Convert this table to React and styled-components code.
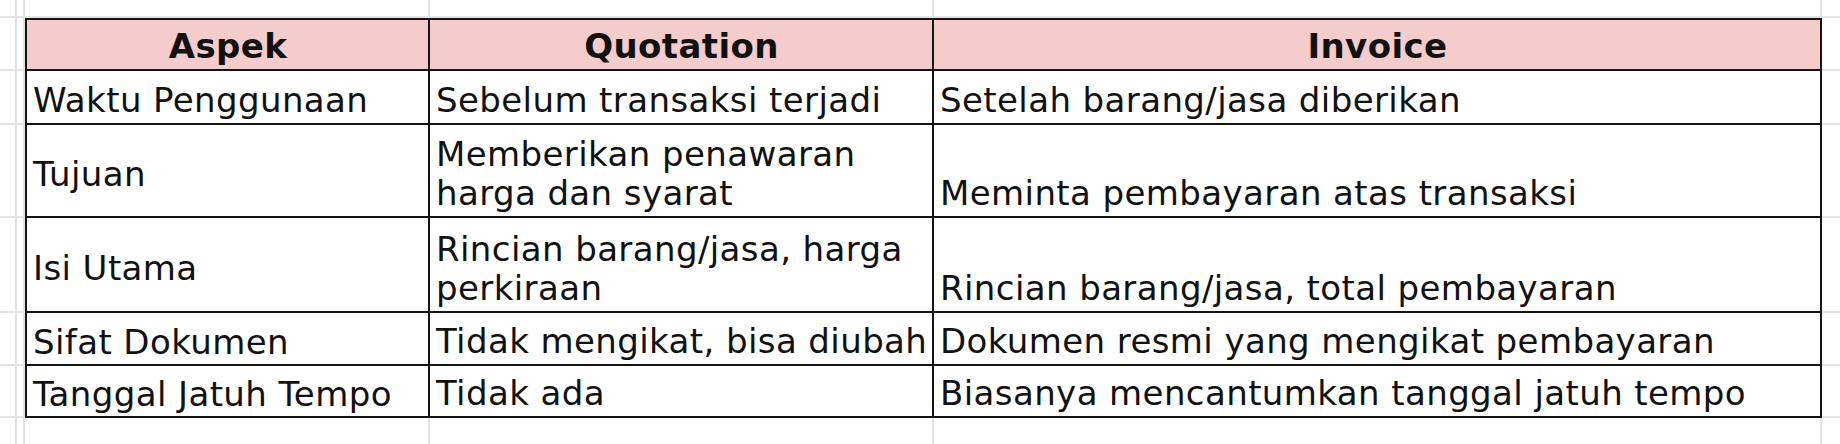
import React from 'react';
import styled, { createGlobalStyle } from 'styled-components';

const GlobalStyle = createGlobalStyle`
  html, body {
    margin: 0;
    padding: 0;
    background: #ffffff;
  }
  body {
    font-family: "DejaVu Sans", "Liberation Sans", sans-serif;
    color: #111111;
  }
`;

/* lembar kerja: kolom & baris mengikuti posisi garis di screenshot */
const Sheet = styled.div`
  display: grid;
  grid-template-columns: 17px 8px 405px 504px 888px 1fr;
  grid-template-rows: 18px 53px 54px 93px 95px 53px 52px 1fr;
  width: 1840px;
  height: 444px;
  overflow: hidden;
  background: #ffffff;
`;

const Blank = styled.div`
  box-sizing: border-box;
  border-right: ${(p) => (p.$lastCol ? 'none' : '2px solid #e3e3e3')};
  border-bottom: ${(p) => (p.$lastRow ? 'none' : '2px solid #e3e3e3')};
`;

const Cell = styled.div`
  box-sizing: border-box;
  display: flex;
  flex-direction: column;
  justify-content: ${(p) => (p.$middle ? 'center' : 'flex-end')};
  align-items: ${(p) => (p.$head ? 'center' : 'flex-start')};
  padding: ${(p) => (p.$middle ? '10px' : '0')} 5px 3px 6px;
  background: ${(p) => (p.$head ? '#f4cccc' : '#ffffff')};
  border-right: 2px solid #141414;
  border-bottom: 2px solid #141414;
  border-top: ${(p) => (p.$head ? '2px solid #141414' : 'none')};
  border-left: ${(p) => (p.$first ? '2px solid #141414' : 'none')};
  font-size: 34px;
  letter-spacing: 0.4px;
  font-weight: ${(p) => (p.$head ? 700 : 400)};
`;

const Line = styled.span`
  display: block;
  white-space: nowrap;
  line-height: 39px;
`;

const header = ['Aspek', 'Quotation', 'Invoice'];

const rows = [
  [['Waktu Penggunaan'], ['Sebelum transaksi terjadi'], ['Setelah barang/jasa diberikan']],
  [['Tujuan'], ['Memberikan penawaran', 'harga dan syarat'], ['Meminta pembayaran atas transaksi']],
  [['Isi Utama'], ['Rincian barang/jasa, harga', 'perkiraan'], ['Rincian barang/jasa, total pembayaran']],
  [['Sifat Dokumen'], ['Tidak mengikat, bisa diubah'], ['Dokumen resmi yang mengikat pembayaran']],
  [['Tanggal Jatuh Tempo'], ['Tidak ada'], ['Biasanya mencantumkan tanggal jatuh tempo']],
];

const EdgeRow = ({ last }) => (
  <>
    <Blank $lastRow={last} />
    <Blank $lastRow={last} />
    <Blank $lastRow={last} />
    <Blank $lastRow={last} />
    <Blank $lastRow={last} />
    <Blank $lastRow={last} $lastCol />
  </>
);

const App = () => {
  return (
    <>
      <GlobalStyle />
      <Sheet>
        <EdgeRow />

        {/* header */}
        <Blank />
        <Blank />
        {header.map((h, i) => (
          <Cell key={h} $head $first={i === 0}>
            <Line>{h}</Line>
          </Cell>
        ))}
        <Blank $lastCol />

        {/* isi tabel */}
        {rows.map((row, r) => (
          <React.Fragment key={r}>
            <Blank />
            <Blank />
            {row.map((lines, c) => (
              <Cell key={c} $first={c === 0} $middle={c === 0}>
                {lines.map((t) => (
                  <Line key={t}>{t}</Line>
                ))}
              </Cell>
            ))}
            <Blank $lastCol />
          </React.Fragment>
        ))}

        <EdgeRow last />
      </Sheet>
    </>
  );
};

export default App;
